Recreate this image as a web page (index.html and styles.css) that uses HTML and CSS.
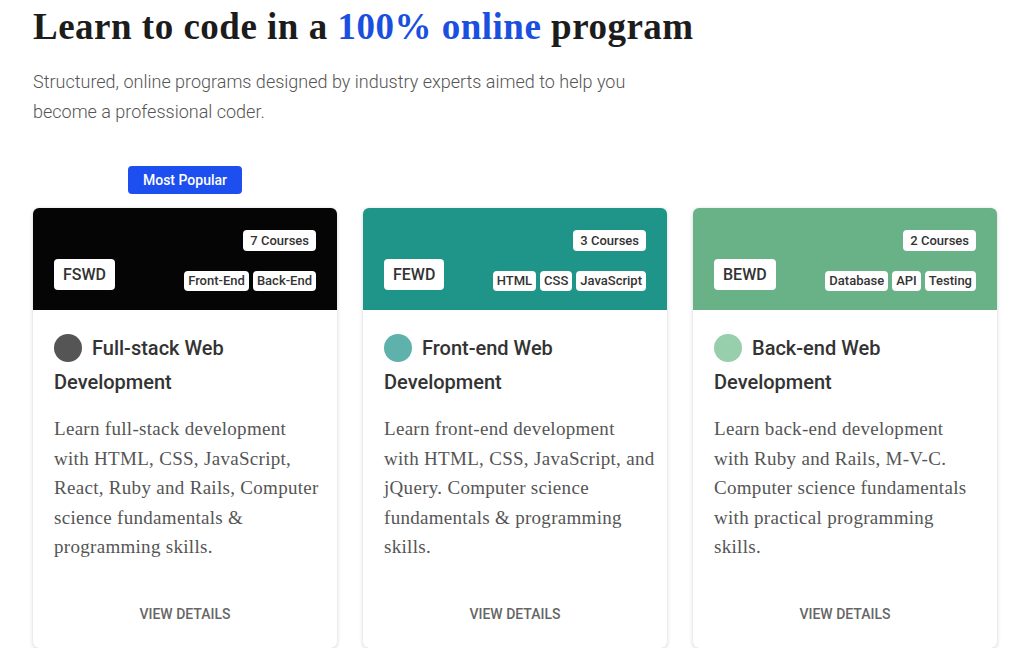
FILE: index.html
```html
<!DOCTYPE html>
<html lang="en">
<head>
<meta charset="utf-8">
<title>Learn to code</title>
<link rel="stylesheet" href="styles.css">
</head>
<body>
<main class="page">
  <h1 class="headline">Learn to code in a <span class="accent">100% online</span> program</h1>
  <p class="lead">Structured, online programs designed by industry experts aimed to help you become a professional coder.</p>

  <div class="cards">
    <div class="col">
      <div class="ribbon-row"><span class="ribbon">Most Popular</span></div>
      <article class="card">
        <header class="card-head head-black">
          <span class="code">FSWD</span>
          <div class="head-right">
            <span class="chip chip-count">7 Courses</span>
            <div class="chips">
              <span class="chip">Front-End</span>
              <span class="chip">Back-End</span>
            </div>
          </div>
        </header>
        <div class="card-body">
          <h2 class="card-title"><span class="dot dot-dark"></span>Full-stack Web Development</h2>
          <p class="card-text">Learn full-stack development<br>with HTML, CSS, JavaScript,<br>React, Ruby and Rails, Computer<br>science fundamentals &amp;<br>programming skills.</p>
          <a class="details" href="#">View details</a>
        </div>
      </article>
    </div>

    <div class="col">
      <div class="ribbon-row"></div>
      <article class="card">
        <header class="card-head head-teal">
          <span class="code">FEWD</span>
          <div class="head-right">
            <span class="chip chip-count">3 Courses</span>
            <div class="chips">
              <span class="chip">HTML</span>
              <span class="chip">CSS</span>
              <span class="chip">JavaScript</span>
            </div>
          </div>
        </header>
        <div class="card-body">
          <h2 class="card-title"><span class="dot dot-teal"></span>Front-end Web Development</h2>
          <p class="card-text">Learn front-end development<br>with HTML, CSS, JavaScript, and<br>jQuery. Computer science<br>fundamentals &amp; programming<br>skills.</p>
          <a class="details" href="#">View details</a>
        </div>
      </article>
    </div>

    <div class="col">
      <div class="ribbon-row"></div>
      <article class="card">
        <header class="card-head head-green">
          <span class="code">BEWD</span>
          <div class="head-right">
            <span class="chip chip-count">2 Courses</span>
            <div class="chips">
              <span class="chip">Database</span>
              <span class="chip">API</span>
              <span class="chip">Testing</span>
            </div>
          </div>
        </header>
        <div class="card-body">
          <h2 class="card-title"><span class="dot dot-green"></span>Back-end Web Development</h2>
          <p class="card-text">Learn back-end development<br>with Ruby and Rails, M-V-C.<br>Computer science fundamentals<br>with practical programming<br>skills.</p>
          <a class="details" href="#">View details</a>
        </div>
      </article>
    </div>
  </div>
</main>
</body>
</html>
```

FILE: styles.css
```css
* { box-sizing: border-box; }

html, body {
  margin: 0;
  padding: 0;
  background: #ffffff;
}

body {
  font-family: Roboto, "Liberation Sans", sans-serif;
  color: #222;
}

.page {
  padding: 0 27px 0 33px;
}

.headline {
  margin: 0;
  padding-top: 5px;
  font-family: "Liberation Serif", "DejaVu Serif", serif;
  font-weight: 700;
  font-size: 37px;
  line-height: 44px;
  color: #1c1c1c;
  letter-spacing: 0.5px;
}

.accent { color: #1a4fe0; }

.lead {
  margin: 18px 0 0;
  max-width: 620px;
  font-family: Roboto, sans-serif;
  font-weight: 300;
  font-size: 18px;
  line-height: 30px;
  color: #555;
}

.cards {
  display: grid;
  grid-template-columns: repeat(3, 304px);
  column-gap: 26px;
  margin-top: 39px;
}

.col {
  display: flex;
  flex-direction: column;
}

.ribbon-row {
  height: 42px;
  display: flex;
  justify-content: center;
  align-items: flex-start;
}

.ribbon {
  display: inline-block;
  background: #1d4ef0;
  color: #fff;
  font-weight: 500;
  font-size: 14px;
  line-height: 28px;
  padding: 0 15px;
  border-radius: 4px;
}

.card {
  height: 440px;
  display: flex;
  flex-direction: column;
  background: #fff;
  border-radius: 6px;
  box-shadow: 0 1px 4px rgba(0,0,0,0.16), 0 0 1px rgba(0,0,0,0.12);
  overflow: hidden;
}

.card-head {
  height: 102px;
  display: flex;
  justify-content: space-between;
  align-items: flex-end;
  padding: 0 21px 19px 21px;
}

.head-black { background: #050505; }
.head-teal { background: #1f9488; }
.head-green { background: #69b187; }

.code {
  background: #fff;
  color: #333;
  border-radius: 4px;
  font-weight: 500;
  font-size: 16px;
  line-height: 31px;
  padding: 0 9px;
  margin-bottom: 1px;
}

.head-right {
  display: flex;
  flex-direction: column;
  align-items: flex-end;
  gap: 20px;
}

.chips {
  display: flex;
  gap: 4px;
}

.chip {
  background: #fff;
  color: #333;
  border-radius: 4px;
  font-weight: 500;
  font-size: 13px;
  line-height: 20px;
  padding: 0 4px;
}

.chip-count {
  padding: 0 7px;
  line-height: 21px;
}

.card-body {
  flex: 1;
  display: flex;
  flex-direction: column;
  padding: 21px 8px 24px 21px;
}

.card-title {
  margin: 0;
  padding-right: 12px;
  font-weight: 500;
  font-size: 20px;
  line-height: 34px;
  color: #333;
}

.dot {
  display: inline-block;
  width: 28px;
  height: 28px;
  border-radius: 50%;
  vertical-align: -7px;
  margin-right: 10px;
}

.dot-dark { background: #555555; }
.dot-teal { background: #5fb2ac; }
.dot-green { background: #97ceab; }

.card-text {
  margin: 15px 0 0;
  white-space: nowrap;
  font-family: "Liberation Serif", "DejaVu Serif", serif;
  font-size: 19px;
  letter-spacing: 0.3px;
  line-height: 29.5px;
  color: #555;
}

.details {
  margin-top: auto;
  margin-right: 13px;
  text-align: center;
  text-transform: uppercase;
  text-decoration: none;
  color: #666;
  font-weight: 500;
  font-size: 14px;
  line-height: 20px;
}
```
